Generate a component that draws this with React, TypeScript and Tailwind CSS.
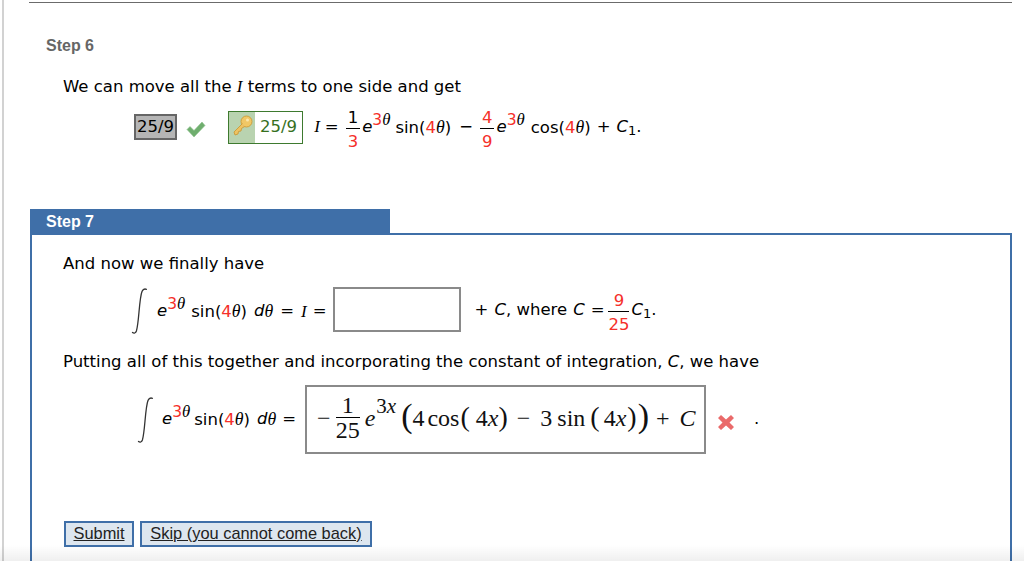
const RED = "text-[#f5302a]";

function Frac({ top, bottom, redTop = true, redBottom = true }: { top: string; bottom: string; redTop?: boolean; redBottom?: boolean }) {
  return (
    <span className="inline-flex flex-col items-stretch text-center leading-[19px] ml-[1px] mr-[2px] translate-y-[2px]">
      <span className={`${redTop ? RED : "text-black"} border-b border-black px-[2px] pb-[1px]`}>{top}</span>
      <span className={`${redBottom ? RED : "text-black"} pt-[3px]`}>{bottom}</span>
    </span>
  );
}

function Theta() {
  return <span className="italic font-['Liberation_Serif',serif] text-[1.08em]">θ</span>;
}

function Exp3() {
  return (
    <span className="inline-flex items-start">
      <span className="italic">e</span>
      <span className="text-[15.500px] -translate-y-[5px] leading-[20px]">
        <span className={RED}>3</span>
        <Theta />
      </span>
    </span>
  );
}

function FourTheta() {
  return (
    <>
      (<span className={RED}>4</span>
      <Theta />)
    </>
  );
}

function Integral() {
  return (
    <svg width="22" height="48" viewBox="0 0 22 48" fill="none" className="shrink-0 translate-y-[1px]">
      <path d="M1.500 45.500c1.500 1.200 3.200.6 3.900-1.500.9-3 1.800-10 2.600-19 .8-9 1.600-17 3-20.500.8-2 2.400-3 4.400-2.200" stroke="#333" strokeWidth="1.300" strokeLinecap="round" />
    </svg>
  );
}

function Check() {
  return (
    <svg width="20" height="17" viewBox="0 0 20 17" className="shrink-0">
      <path d="M1 8.500 4 5.500 8 9.500 16 1 19 4.500 8 16Z" fill="#6fae6e" stroke="#8cc08b" strokeWidth="0.6" />
    </svg>
  );
}

function Cross() {
  return (
    <svg width="18" height="17" viewBox="0 0 18 17" className="shrink-0">
      <path d="M1 4 4 1 9 5.500 14 1 17 4 12.500 8.500 17 13 14 16 9 11.500 4 16 1 13 5.500 8.500Z" fill="#ea6a6a" />
    </svg>
  );
}

function Key() {
  return (
    <svg width="22" height="30" viewBox="0 0 22 30">
      <circle cx="15.500" cy="9.500" r="5.500" fill="#f0c766" stroke="#c9962f" strokeWidth="0.8" />
      <path d="M11.500 11.500 3 20l1 3 3-1 .5-2.500 2.500-.5.5-2.500 3-2" fill="#edc263" stroke="#c9962f" strokeWidth="0.8" />
      <circle cx="16.500" cy="8" r="1.500" fill="#fbe7ae" />
    </svg>
  );
}

export default function App() {
  return (
    <div className="relative w-[1024px] h-[561px] overflow-hidden bg-white font-['DejaVu_Sans',sans-serif] text-[16.500px] text-black">
      <div className="ml-[2px] h-full border-l-2 border-[#d2d2d2] pl-[25px]">
        <div className="w-[983px]">
          <div className="pt-[2px]">
            <div className="h-[1px] bg-[#6b6b6b]" />
          </div>

          {/* Step 6 */}
          <div className="h-[206px]">
            <div className="pl-[17px] pt-[34px] font-['Liberation_Sans',sans-serif] font-bold text-[16px] leading-[18px] text-[#666]">Step 6</div>
            <p className="pl-[34px] mt-[22px] leading-[20px] whitespace-nowrap">
              We can move all the <span className="italic font-['Liberation_Serif',serif] text-[17px]">I</span> terms to one side and get
            </p>
            <div className="flex items-center pl-[105px] mt-[10px] h-[40px] whitespace-nowrap">
              <span className="border-2 border-[#666] bg-[#b5b5b5] h-[26px] px-[1px] leading-[22px] flex items-center">25/9</span>
              <span className="ml-[9px] mr-[22px] mt-[5px]"><Check /></span>
              <span className="flex items-center border border-[#3e7a2f] h-[33px] bg-white">
                <span className="flex items-center justify-center w-[26px] h-full bg-[#b9d3b0]"><Key /></span>
                <span className="px-[5px] text-[#37701f]">25/9</span>
              </span>
              <span className="ml-[11px] flex items-center gap-[5px]">
                <span className="italic font-['Liberation_Serif',serif] text-[17px]">I</span>
                <span>=</span>
              </span>
              <span className="ml-[6px] flex items-center">
                <Frac top="1" bottom="3" redTop={false} />
                <Exp3 />
                <span className="ml-[5px]">sin<FourTheta /></span>
                <span className="ml-[8px] mr-[6px]">−</span>
                <Frac top="4" bottom="9" />
                <Exp3 />
                <span className="ml-[6px]">cos<FourTheta /></span>
                <span className="ml-[6px]">+</span>
                <span className="ml-[6px] italic">C</span>
                <span className="text-[13px] translate-y-[4px]">1</span>
                <span>.</span>
              </span>
            </div>
          </div>

          {/* Step 7 */}
          <div className="ml-[1px] w-[360px] h-[25px] bg-[#3f6fa8] pl-[16px] font-['Liberation_Sans',sans-serif] font-bold text-[16px] leading-[25px] text-white">Step 7</div>
          <div className="ml-[1px] h-[400px] border-2 border-b-0 border-[#3f6fa8] -mt-[1px] pl-[31px]">
            <p className="pt-[19px] leading-[20px]">And now we finally have</p>
            <div className="flex items-center h-[48px] mt-[12px] pl-[68px] whitespace-nowrap">
              <Integral />
              <span className="ml-[4px] mt-[3px] flex items-center">
                <Exp3 />
                <span className="ml-[6px]">sin<FourTheta /></span>
                <span className="ml-[7px] italic">d</span>
                <Theta />
                <span className="ml-[7px]">=</span>
                <span className="ml-[7px] italic font-['Liberation_Serif',serif] text-[17px]">I</span>
                <span className="ml-[6px]">=</span>
              </span>
              <span className="ml-[6px] -mt-[1px] w-[128px] h-[45px] border-2 border-[#8a8a8a] bg-white" />
              <span className="ml-[14px] flex items-center">
                <span>+</span>
                <span className="ml-[6px] italic">C</span>
                <span>, where</span>
                <span className="ml-[6px] italic">C</span>
                <span className="ml-[6px]">=</span>
                <span className="ml-[3px] inline-flex"><Frac top="9" bottom="25" /></span>
                <span className="italic">C</span>
                <span className="text-[13px] translate-y-[4px]">1</span>
                <span>.</span>
              </span>
            </div>
            <p className="mt-[18px] leading-[20px] whitespace-nowrap">
              Putting all of this together and incorporating the constant of integration, <span className="italic">C</span>, we have
            </p>
            <div className="flex items-center h-[70px] mt-[12px] pl-[74px] whitespace-nowrap">
              <Integral />
              <span className="ml-[3px] flex items-center">
                <Exp3 />
                <span className="ml-[4px]">sin<FourTheta /></span>
                <span className="ml-[7px] italic">d</span>
                <Theta />
                <span className="ml-[6px]">=</span>
              </span>
              <div className="ml-[9px] flex items-center w-[401px] h-[69px] border-2 border-[#8a8a8a] pl-[10px] pb-[2px] font-['Liberation_Serif',serif] text-[24px] text-[#111] shrink-0">
                <span>−</span>
                <span className="ml-[5px] inline-flex flex-col text-center leading-[24px] -translate-y-[1px]">
                  <span className="border-b border-black px-[1px]">1</span>
                  <span>25</span>
                </span>
                <span className="ml-[5px] italic">e</span>
                <span className="ml-[1px] text-[21px] -translate-y-[12px] leading-[20px]">3<span className="italic">x</span></span>
                <span className="ml-[5px] text-[34px] font-light leading-none -translate-y-[2px]">(</span>
                <span>4</span>
                <span className="ml-[3px]">cos</span>
                <span className="ml-[1px] text-[28px] leading-none -translate-y-[1px]">(</span>
                <span className="ml-[6px]">4<span className="italic">x</span></span>
                <span className="text-[28px] leading-none -translate-y-[1px]">)</span>
                <span className="ml-[9px]">−</span>
                <span className="ml-[10px]">3</span>
                <span className="ml-[5px]">sin</span>
                <span className="ml-[5px] text-[28px] leading-none -translate-y-[1px]">(</span>
                <span className="ml-[4px]">4<span className="italic">x</span></span>
                <span className="ml-[1px] text-[28px] leading-none -translate-y-[1px]">)</span>
                <span className="ml-[1px] text-[34px] leading-none -translate-y-[2px]">)</span>
                <span className="ml-[7px]">+</span>
                <span className="ml-[10px] italic">C</span>
              </div>
              <span className="ml-[11px] mt-[7px]"><Cross /></span>
              <span className="ml-[19px]">.</span>
            </div>
            <div className="flex items-center gap-[6px] mt-[67px] pl-[1px] font-['Liberation_Sans',sans-serif] text-[16.400px]">
              <button className="w-[70px] h-[26px] pb-[2px] border-2 border-[#3f6fa8] bg-[#dde6ef] underline leading-[20px] text-[#222]">Submit</button>
              <button className="w-[232px] h-[26px] pb-[2px] border-2 border-[#3f6fa8] bg-[#dde6ef] underline leading-[20px] text-[#222]">Skip (you cannot come back)</button>
            </div>
          </div>
        </div>
      </div>
      <div className="absolute left-0 right-0 bottom-0 h-[16px] bg-gradient-to-b from-transparent to-[#00000010] pointer-events-none" />
    </div>
  );
}
